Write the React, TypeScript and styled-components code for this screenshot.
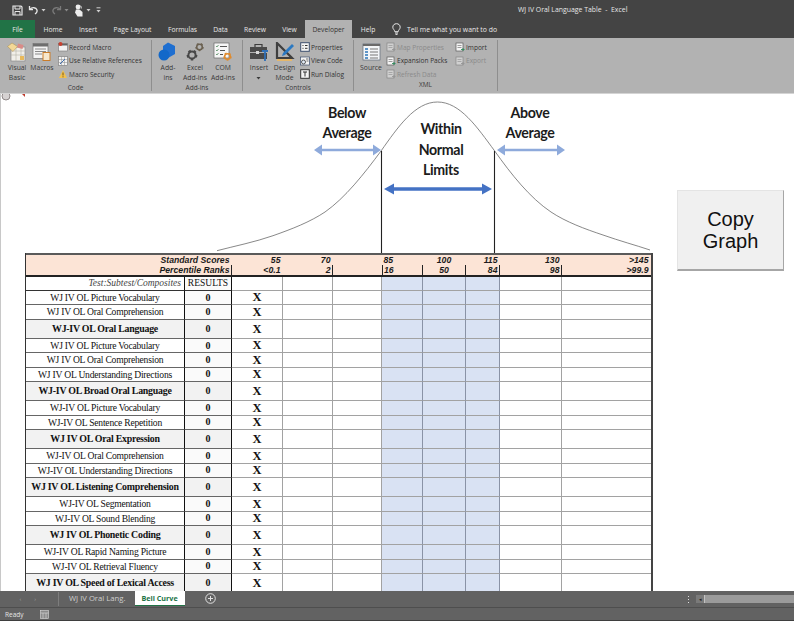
import React from 'react';
import styled, { createGlobalStyle } from 'styled-components';

const GlobalStyle = createGlobalStyle`
    html, body {
        margin: 0;
        padding: 0;
        background: #ffffff;
    }
`;

const Window = styled.div`
    width: 794px;
    height: 621px;
    display: flex;
    flex-direction: column;
    overflow: hidden;
    font-family: 'Open Sans', 'Liberation Sans', sans-serif;
`;

const TitleBar = styled.div`
    height: 20px;
    background: #444444;
    display: flex;
    align-items: center;
    position: relative;
    flex-shrink: 0;
`;

const QuickAccess = styled.div`
    display: flex;
    align-items: center;
    padding-left: 12px;
    gap: 5px;
`;

const QatPair = styled.span`
    display: flex;
    align-items: center;
    gap: 2px;
`;

const DocTitle = styled.div`
    position: absolute;
    left: 518px;
    top: 4px;
    font-size: 6.9px;
    line-height: 11px;
    color: #e6e6e6;
    white-space: pre;
`;

const TabBar = styled.div`
    height: 18px;
    background: #444444;
    display: flex;
    flex-shrink: 0;
`;

const Tab = styled.div<{ $w: number; $kind?: 'file' | 'active' }>`
    width: ${(p) => p.$w}px;
    display: flex;
    align-items: center;
    justify-content: center;
    font-size: 6.7px;
    color: ${(p) => (p.$kind === 'active' ? '#333333' : '#e8e8e8')};
    background: ${(p) =>
        p.$kind === 'file' ? '#217346' : p.$kind === 'active' ? '#b2b2b2' : 'transparent'};
`;

const TellMe = styled.div`
    display: flex;
    align-items: center;
    gap: 6px;
    margin-left: 8px;
    font-size: 6.85px;
    color: #e8e8e8;
`;

const Ribbon = styled.div`
    height: 56px;
    background: #b2b2b2;
    border-bottom: 1px solid #d4d4d4;
    box-sizing: border-box;
    display: flex;
    padding-top: 2px;
    flex-shrink: 0;
`;

const Group = styled.div<{ $w: number }>`
    width: ${(p) => p.$w}px;
    height: 51px;
    box-sizing: border-box;
    border-right: 1px solid #8e8e8e;
    display: flex;
    flex-direction: column;
`;

const GroupBody = styled.div<{ $pad: number }>`
    flex: 1;
    display: flex;
    padding-left: ${(p) => p.$pad}px;
`;

const GroupCaption = styled.div`
    height: 11px;
    text-align: center;
    font-size: 6.5px;
    line-height: 9px;
    color: #3a3a3a;
`;

const BigButton = styled.div<{ $w: number }>`
    width: ${(p) => p.$w}px;
    display: flex;
    flex-direction: column;
    align-items: center;
    padding-top: 2px;
`;

const BigIcon = styled.div`
    height: 20px;
    display: flex;
    align-items: center;
    justify-content: center;
`;

const BigLabel = styled.div`
    margin-top: 1px;
    font-size: 6.8px;
    line-height: 10px;
    color: #3a3a3a;
    text-align: center;
    white-space: pre;
`;

const SmallStack = styled.div<{ $w?: number; $left?: number }>`
    ${(p) => (p.$w ? `width: ${p.$w}px;` : '')}
    margin-left: ${(p) => p.$left ?? 0}px;
    display: flex;
    flex-direction: column;
    gap: 3.7px;
    padding-top: 2px;
`;

const SmallItem = styled.div<{ $off?: boolean }>`
    height: 10px;
    display: flex;
    align-items: center;
    gap: 1px;
    font-size: 6.55px;
    white-space: nowrap;
    color: ${(p) => (p.$off ? '#858585' : '#333333')};
    opacity: ${(p) => (p.$off ? 0.85 : 1)};
`;

const Sheet = styled.div`
    flex: 1;
    min-height: 0;
    position: relative;
    overflow: hidden;
    background: #ffffff;
    border-left: 1px solid #c8c8c8;
`;

const CommentMark = styled.svg`
    position: absolute;
    left: 0;
    top: 0;
`;

const ChartArea = styled.div`
    position: relative;
    height: 159px;
    margin-left: -1px;
`;

const CurveLabel = styled.div<{ $x: number; $y: number; $lh: number }>`
    position: absolute;
    left: ${(p) => p.$x - 60}px;
    top: ${(p) => p.$y}px;
    width: 120px;
    text-align: center;
    font-family: Lato, 'Open Sans', sans-serif;
    font-weight: 700;
    font-size: 14.2px;
    letter-spacing: -0.35px;
    line-height: ${(p) => p.$lh}px;
    color: #1c1c1c;
    white-space: pre;
`;

const CopyButton = styled.div`
    position: absolute;
    left: 676px;
    top: 96px;
    width: 107px;
    height: 81px;
    box-sizing: border-box;
    background: #f0f0f0;
    border-right: 1px solid #a6a6a6;
    border-bottom: 2px solid #a6a6a6;
    border-top: 1px solid #e4e4e4;
    border-left: 1px solid #e4e4e4;
    display: flex;
    align-items: center;
    justify-content: center;
    text-align: center;
    font-family: 'Liberation Sans', Arial, sans-serif;
    font-size: 20px;
    line-height: 22px;
    color: #111111;
`;

// the last column takes what the table's outer borders leave over
const COLUMNS = '158px 48px 51px 50px 49px 41px 43px 34px 62px 1fr';

const Table = styled.div`
    width: 628px;
    margin-left: 24px;
    box-sizing: border-box;
    border-left: 1px solid #333333;
    border-right: 2px solid #444444;
`;

const ScoreHeader = styled.div`
    background: #fce4d6;
    border-top: 2px solid #5a5a5a;
    border-bottom: 2px solid #222222;
    display: grid;
    grid-template-columns: ${COLUMNS};
    grid-template-rows: 10px 10px;
`;

const ScoreCell = styled.div<{
    $col: number;
    $span?: number;
    $row: number;
    $align?: string;
    $tickRight?: boolean;
    $tickLeft?: boolean;
}>`
    grid-column: ${(p) => p.$col} / span ${(p) => p.$span ?? 1};
    grid-row: ${(p) => p.$row};
    text-align: ${(p) => p.$align ?? 'right'};
    font-family: 'Liberation Sans', Arial, sans-serif;
    font-style: italic;
    font-weight: 700;
    font-size: 8.7px;
    line-height: 10px;
    color: #1a1a1a;
    padding: 0 ${(p) => (p.$tickRight ? '1.5px' : '2.5px')} 0 ${(p) => (p.$tickLeft ? '1px' : '1.5px')};
    white-space: nowrap;
    box-sizing: border-box;
    border-right: ${(p) => (p.$tickRight ? '1px solid #222222' : 'none')};
    border-left: ${(p) => (p.$tickLeft ? '1px solid #222222' : 'none')};
`;

const Row = styled.div<{ $h: number }>`
    height: ${(p) => p.$h}px;
    display: grid;
    grid-template-columns: ${COLUMNS};
    grid-template-rows: minmax(0, 1fr);
`;

const NameCell = styled.div<{ $bold?: boolean; $head?: boolean }>`
    box-sizing: border-box;
    display: flex;
    align-items: center;
    justify-content: ${(p) => (p.$head ? 'flex-end' : 'center')};
    padding-right: ${(p) => (p.$head ? '3px' : '0')};
    border-bottom: 1px solid ${(p) => (p.$head ? '#333333' : '#666666')};
    background: ${(p) => (p.$bold ? '#f2f2f2' : '#ffffff')};
    font-family: 'Liberation Serif', 'Times New Roman', serif;
    font-size: ${(p) => (p.$head ? '9.5px' : p.$bold ? '9.9px' : '9.6px')};
    letter-spacing: ${(p) => (p.$head ? '0' : p.$bold ? '-0.25px' : '-0.22px')};
    line-height: 1;
    font-weight: ${(p) => (p.$bold ? 700 : 400)};
    font-style: ${(p) => (p.$head ? 'italic' : 'normal')};
    color: ${(p) => (p.$head ? '#444444' : '#111111')};
    white-space: nowrap;
`;

const ResultCell = styled.div<{ $bold?: boolean; $head?: boolean }>`
    box-sizing: border-box;
    display: flex;
    align-items: center;
    justify-content: center;
    border-left: 1px solid #111111;
    border-right: 1px solid #111111;
    border-bottom: 1px solid ${(p) => (p.$head ? '#333333' : '#666666')};
    background: ${(p) => (p.$bold ? '#f2f2f2' : '#fafafa')};
    font-family: 'Liberation Serif', 'Times New Roman', serif;
    font-size: ${(p) => (p.$head ? '9.5px' : '10px')};
    line-height: 1;
    font-weight: ${(p) => (p.$head ? 400 : 700)};
    color: #111111;
`;

const ScaleCell = styled.div<{ $normal?: boolean; $last?: boolean }>`
    box-sizing: border-box;
    display: flex;
    align-items: center;
    justify-content: center;
    border-bottom: 1px solid #a2a2a2;
    border-right: ${(p) => (p.$last ? 'none' : `1px solid ${p.$normal ? '#8a93a6' : '#a2a2a2'}`)};
    background: ${(p) => (p.$normal ? '#d9e2f3' : '#ffffff')};
    font-family: 'Liberation Serif', 'Times New Roman', serif;
    font-weight: 700;
    font-size: 12.5px;
    line-height: 1;
    color: #111111;
`;

const SheetTabs = styled.div`
    height: 16px;
    background: #626262;
    display: flex;
    align-items: flex-start;
    position: relative;
    flex-shrink: 0;
`;

const TabNav = styled.div`
    width: 59px;
    height: 14px;
    margin-top: 1px;
    box-sizing: border-box;
    border-right: 1px solid #7d7d7d;
    display: flex;
    align-items: center;
    justify-content: flex-end;
    gap: 13px;
    padding-right: 22px;
    font-size: 6px;
    color: #a0a0a0;
`;

const SheetTab = styled.div<{ $active?: boolean }>`
    height: 14px;
    display: flex;
    align-items: center;
    padding: ${(p) => (p.$active ? '0 7px 0 6px' : '0 10px')};
    background: ${(p) => (p.$active ? '#ffffff' : 'transparent')};
    border-bottom: ${(p) => (p.$active ? '1px solid #217346' : 'none')};
    color: ${(p) => (p.$active ? '#217346' : '#cfcfcf')};
    font-size: ${(p) => (p.$active ? '7.2px' : '7.7px')};
    font-weight: ${(p) => (p.$active ? 700 : 400)};
    white-space: nowrap;
`;

const AddSheet = styled.div`
    margin-left: 20px;
    margin-top: 2px;
    display: flex;
`;

const ScrollArea = styled.div`
    position: absolute;
    left: 686px;
    right: 0;
    top: 0;
    height: 16px;
    display: flex;
    align-items: center;
    gap: 7px;
`;

const SplitDots = styled.div`
    width: 1px;
    height: 7px;
    background: repeating-linear-gradient(#e0e0e0 0 1px, transparent 1px 3px);
    margin-left: 2px;
`;

const ScrollTrack = styled.div`
    flex: 1;
    height: 8px;
    background: #9b9b9b;
    display: flex;
`;

const ScrollButton = styled.div`
    width: 8px;
    height: 8px;
    background: #7a7a7a;
    border-right: 1px solid #c2c2c2;
    display: flex;
    align-items: center;
    justify-content: center;
    font-size: 5px;
    color: #222222;
`;

const StatusBar = styled.div`
    height: 14px;
    background: #626262;
    border-top: 1px solid #4e4e4e;
    border-bottom: 1px solid #3e3e3e;
    box-sizing: border-box;
    display: flex;
    align-items: center;
    padding-left: 5px;
    gap: 16px;
    font-size: 6.5px;
    color: #e4e4e4;
    flex-shrink: 0;
`;

// ribbon and title bar icons
const SaveIcon = () => (
    <svg width="11" height="11" viewBox="0 0 11 11">
        <path d="M1 1h8l1 1v8H1z" fill="none" stroke="#e8e8e8" strokeWidth="1.2" />
        <path d="M3 1v3h5V1M3 10V6.5h5V10" fill="none" stroke="#e8e8e8" />
    </svg>
);

const UndoIcon = () => (
    <svg width="11" height="10" viewBox="0 0 11 10">
        <path d="M1.5 1v3.5H5" fill="none" stroke="#e8e8e8" strokeWidth="1.3" />
        <path d="M2 4.3C4 2 8 2.2 9 5c.5 1.7-.5 3-2 4" fill="none" stroke="#e8e8e8" strokeWidth="1.3" />
    </svg>
);

const RedoIcon = () => (
    <svg width="11" height="10" viewBox="0 0 11 10">
        <path d="M9.5 1v3.500H6" fill="none" stroke="#7a7a7a" strokeWidth="1.300" />
        <path d="M9 4.300C7 2 3 2.200 2 5c-.5 1.700.5 3 2 4" fill="none" stroke="#7a7a7a" strokeWidth="1.300" />
    </svg>
);

const Caret = ({ color = '#cfcfcf' }: { color?: string }) => (
    <svg width="5" height="4" viewBox="0 0 5 4">
        <path d="M0.5 1h4L2.5 3.5z" fill={color} />
    </svg>
);

const TouchIcon = () => (
    <svg width="10" height="13" viewBox="0 0 10 13">
        <circle cx="4" cy="3" r="2.4" fill="#ededed" />
        <path d="M2 5.5h3.5l3 2.5v4.5H3.5L1 8.5z" fill="#ededed" />
        <path d="M5.5 1.5c1.5.3 2 1.5 1.7 3" fill="none" stroke="#ededed" />
    </svg>
);

const CustomizeIcon = () => (
    <svg width="5" height="6" viewBox="0 0 5 6">
        <path d="M0.5 0.8h4" stroke="#cfcfcf" />
        <path d="M0.5 3h4L2.5 5.5z" fill="#cfcfcf" />
    </svg>
);

const BulbIcon = () => (
    <svg width="9" height="12" viewBox="0 0 9 12">
        <path
            d="M4.5.7C2.3.7.8 2.2.8 4.2c0 1.900 1.700 2.500 2 4.500h3.400c.3-2 2-2.600 2-4.500C8.200 2.200 6.700.7 4.500.7z"
            fill="none"
            stroke="#e8e8e8"
        />
        <path d="M3 10h3M3.500 11.400h2" stroke="#e8e8e8" />
    </svg>
);

const VisualBasicIcon = () => (
    <svg width="20" height="20" viewBox="0 0 20 20">
        <rect x="4" y="5" width="14" height="14" fill="#f1efe9" stroke="#8c8c8c" strokeWidth="0.7" />
        <path d="M4 9h14M4 13h14M9 5v14M14 5v9" stroke="#b5b1a8" strokeWidth="0.6" />
        <path d="M0.500 4.500L5 1l5.500 3.500L6 9.500z" fill="#f4d896" stroke="#a78d50" strokeWidth="0.5" />
        <path d="M11 1.500l5.500 1.500-1 4-5.500-1.500z" fill="#d98b87" />
        <rect x="13" y="14" width="4" height="4" fill="#e8b95a" />
    </svg>
);

const MacrosIcon = () => (
    <svg width="20" height="20" viewBox="0 0 20 20">
        <rect x="1" y="1.500" width="15" height="15" fill="#f3f3f3" stroke="#777777" strokeWidth="0.7" />
        <rect x="1" y="1.500" width="15" height="3" fill="#6e6e6e" />
        <path d="M3 7h11M3 9.500h11M3 12h7" stroke="#8a8a8a" />
        <rect x="11" y="10.500" width="7" height="8" fill="#f6e7cd" stroke="#c97c2a" />
    </svg>
);

const RecordIcon = () => (
    <svg width="10" height="10" viewBox="0 0 10 10">
        <rect x="0.500" y="1.500" width="9" height="7.500" fill="#f2f2f2" stroke="#777777" strokeWidth="0.6" />
        <rect x="0.500" y="1.500" width="9" height="2" fill="#666666" />
        <circle cx="2.500" cy="2" r="2" fill="#c8402f" />
    </svg>
);

const RelativeIcon = () => (
    <svg width="10" height="10" viewBox="0 0 10 10">
        <rect x="0.500" y="0.500" width="9" height="9" fill="#f2f2f2" stroke="#777777" strokeWidth="0.6" />
        <path d="M0.500 3.500h9M0.500 6.500h9M3.500.5v9M6.500.5v9" stroke="#8a8a8a" strokeWidth="0.5" />
        <path d="M2 8l5-5" stroke="#3f6fb0" />
    </svg>
);

const WarningIcon = () => (
    <svg width="10" height="10" viewBox="0 0 10 10">
        <path d="M5 1l4 8H1z" fill="#f2c14e" />
        <path d="M5 3.500v3M5 7.300v1" stroke="#6d4a0a" strokeWidth="0.9" />
    </svg>
);

const AddInsIcon = () => (
    <svg width="20" height="20" viewBox="0 0 20 20">
        <path d="M10 0.500l7 3.500v8l-7 4-5-3V4z" fill="#1f6fd0" />
        <circle cx="6" cy="13" r="5.500" fill="#1268c9" />
    </svg>
);

const Gear = ({ cx, cy, r, color }: { cx: number; cy: number; r: number; color: string }) => (
    <g>
        <circle cx={cx} cy={cy} r={r} fill="none" stroke={color} strokeWidth={r * 0.55} />
        <circle cx={cx} cy={cy} r={r * 1.28} fill="none" stroke={color} strokeWidth={r * 0.45} strokeDasharray={`${r * 0.7} ${r * 0.9}`} />
    </g>
);

const ExcelAddInsIcon = () => (
    <svg width="20" height="20" viewBox="0 0 20 20">
        <Gear cx={7} cy={13} r={3.600} color="#474747" />
        <Gear cx={14.500} cy={5} r={2.800} color="#6a6050" />
    </svg>
);

const ComAddInsIcon = () => (
    <svg width="20" height="20" viewBox="0 0 20 20">
        <rect x="1" y="1" width="15" height="15" fill="#f6f6f6" stroke="#6a6a6a" strokeWidth="0.7" />
        <path d="M3 4l1 1 1.500-2M3 8l1 1 1.500-2M3 12l1 1 1.500-2" fill="none" stroke="#3d7d4e" strokeWidth="0.7" />
        <path d="M7 4.500h7M7 8.500h5M7 12.500h3" stroke="#555555" />
        <Gear cx={14.500} cy={14.500} r={2.800} color="#e08a2c" />
    </svg>
);

const InsertIcon = () => (
    <svg width="20" height="20" viewBox="0 0 20 20">
        <path d="M6 5V2.500h7V5" fill="none" stroke="#3c3c3c" strokeWidth="1.200" />
        <rect x="1" y="5" width="17" height="12" fill="#4a4a4a" />
        <rect x="1" y="10" width="17" height="1" fill="#b2b2b2" />
        <rect x="7" y="9" width="3" height="3" fill="#d8d8d8" />
        <path d="M13 9h6M16 9v10" stroke="#2f6fb7" strokeWidth="1.800" />
    </svg>
);

const DesignModeIcon = () => (
    <svg width="20" height="20" viewBox="0 0 20 20">
        <path d="M2 1v15h15z" fill="none" stroke="#3f3f3f" strokeWidth="2.200" />
        <path d="M8 11L17 2l2 2-9 9-3 1z" fill="#2b79c2" />
        <rect x="2" y="17" width="15" height="2" fill="#e5b76a" />
    </svg>
);

const PropertiesIcon = () => (
    <svg width="10" height="10" viewBox="0 0 10 10">
        <rect x="0.700" y="0.700" width="8.600" height="8.600" fill="#f4f4f4" stroke="#3d4f6e" />
        <path d="M2.500 3.500h1M5 3.500h2.500M2.500 6.300h1M5 6.300h2.500" stroke="#333333" />
    </svg>
);

const ViewCodeIcon = () => (
    <svg width="10" height="10" viewBox="0 0 10 10">
        <rect x="0.500" y="1" width="9" height="8" fill="#f4f4f4" stroke="#3d4f6e" strokeWidth="0.7" />
        <circle cx="3.500" cy="6" r="2" fill="#dfe9f5" stroke="#333333" strokeWidth="0.8" />
        <path d="M6 3h2.500M6.500 5h2" stroke="#333333" strokeWidth="0.7" />
    </svg>
);

const RunDialogIcon = () => (
    <svg width="10" height="10" viewBox="0 0 10 10">
        <rect x="0.700" y="0.700" width="8.600" height="8.600" fill="#f4f4f4" stroke="#333333" />
        <path d="M3 3h4M5 3v4.500" stroke="#333333" />
    </svg>
);

const SourceIcon = () => (
    <svg width="19" height="18" viewBox="0 0 19 18">
        <rect x="1" y="1" width="17" height="16" fill="#f4f6f8" stroke="#5e6a78" strokeWidth="0.7" />
        <rect x="1" y="1" width="17" height="2" fill="#6a6a6a" />
        <path d="M3 6h3M3 9h3M3 12h3M3 15h3" stroke="#2e75b6" strokeWidth="1.300" />
        <path d="M8 6h8M8 9h8M8 12h8M8 15h8" stroke="#777777" strokeWidth="1.100" />
    </svg>
);

const SmallDoc = ({ faded, accent }: { faded?: boolean; accent: string }) => (
    <svg width="10" height="10" viewBox="0 0 10 10" opacity={faded ? 0.55 : 1}>
        <rect x="1" y="1" width="7" height="8" fill="#f4f4f4" stroke="#5b5b5b" strokeWidth="0.7" />
        <path d="M2.500 3.500h4M2.500 5.500h4" stroke="#777777" strokeWidth="0.7" />
        <path d="M6 7.500h3.500M8 6v3" stroke={accent} strokeWidth="0.9" />
    </svg>
);

const BellCurve = () => (
    <svg width="794" height="159" viewBox="0 94 794 159" style={{ display: 'block' }}>
        <path
            d="M217 250.700C235 246 255 242 273 235.700C292 229 310 222 325 212C345 198 364 174 381 151C398 127 415 102 437.500 102C460 102 477 127 494.700 151C511 174 530 198 551 212C566 222 585 229 603 235C620 241 635 245 650 250"
            fill="none"
            stroke="#6a6a6a"
            strokeWidth="0.8"
        />
        <path d="M381.500 151V253M494.500 151V253" stroke="#222222" strokeWidth="1.100" />
        <path d="M321 150H375" stroke="#8eaadb" strokeWidth="2.600" />
        <path d="M314 150l8-5.500v11zM381 150l-8-5.500v11z" fill="#8eaadb" />
        <path d="M503 150H558" stroke="#8eaadb" strokeWidth="2.600" />
        <path d="M497 150l8-5.500v11zM565 150l-8-5.500v11z" fill="#8eaadb" />
        <path d="M391 189H485" stroke="#4472c4" strokeWidth="3.600" />
        <path d="M384 189l10-5.500v11zM492 189l-10-5.500v11z" fill="#4472c4" />
    </svg>
);

interface RowData {
    name: string;
    bold?: boolean;
}

const rows: RowData[] = [
    { name: 'WJ IV OL Picture Vocabulary' },
    { name: 'WJ IV OL Oral Comprehension' },
    { name: 'WJ-IV OL Oral Language', bold: true },
    { name: 'WJ IV OL Picture Vocabulary' },
    { name: 'WJ IV OL Oral Comprehension' },
    { name: 'WJ IV OL Understanding Directions' },
    { name: 'WJ-IV OL Broad Oral Language', bold: true },
    { name: 'WJ-IV OL Picture Vocabulary' },
    { name: 'WJ-IV OL Sentence Repetition' },
    { name: 'WJ IV OL Oral Expression', bold: true },
    { name: 'WJ-IV OL Oral Comprehension' },
    { name: 'WJ-IV OL Understanding Directions' },
    { name: 'WJ IV OL Listening Comprehension', bold: true },
    { name: 'WJ-IV OL Segmentation' },
    { name: 'WJ-IV OL Sound Blending' },
    { name: 'WJ IV OL Phonetic Coding', bold: true },
    { name: 'WJ-IV OL Rapid Naming Picture' },
    { name: 'WJ-IV OL Retrieval Fluency' },
    { name: 'WJ IV OL Speed of Lexical Access', bold: true },
];

const ScaleCells: React.FC<{ mark?: boolean }> = ({ mark }) => (
    <>
        <ScaleCell>{mark ? 'X' : ''}</ScaleCell>
        <ScaleCell />
        <ScaleCell />
        <ScaleCell $normal />
        <ScaleCell $normal />
        <ScaleCell $normal />
        <ScaleCell />
        <ScaleCell $last />
    </>
);

const tabs: [string, number][] = [
    ['Home', 36],
    ['Insert', 34],
    ['Page Layout', 55],
    ['Formulas', 45],
    ['Data', 31],
    ['Review', 38],
    ['View', 31],
];

export default function App() {
    return (
        <Window>
            <GlobalStyle />
            <TitleBar>
                <QuickAccess>
                    <SaveIcon />
                    <QatPair><UndoIcon /><Caret /></QatPair>
                    <QatPair><RedoIcon /><Caret color="#8a8a8a" /></QatPair>
                    <QatPair><TouchIcon /><Caret /></QatPair>
                    <CustomizeIcon />
                </QuickAccess>
                <DocTitle>WJ IV Oral Language Table  -  Excel</DocTitle>
            </TitleBar>
            <TabBar>
                <Tab $w={35} $kind="file">File</Tab>
                {tabs.map(([label, w]) => (
                    <Tab key={label} $w={w}>{label}</Tab>
                ))}
                <Tab $w={47} $kind="active">Developer</Tab>
                <Tab $w={32}>Help</Tab>
                <TellMe>
                    <BulbIcon />
                    Tell me what you want to do
                </TellMe>
            </TabBar>
            <Ribbon>
                <Group $w={152}>
                    <GroupBody $pad={4}>
                        <BigButton $w={26}>
                            <BigIcon><VisualBasicIcon /></BigIcon>
                            <BigLabel>{'Visual\nBasic'}</BigLabel>
                        </BigButton>
                        <BigButton $w={24}>
                            <BigIcon><MacrosIcon /></BigIcon>
                            <BigLabel>Macros</BigLabel>
                        </BigButton>
                        <SmallStack $left={4}>
                            <SmallItem><RecordIcon />Record Macro</SmallItem>
                            <SmallItem><RelativeIcon />Use Relative References</SmallItem>
                            <SmallItem><WarningIcon />Macro Security</SmallItem>
                        </SmallStack>
                    </GroupBody>
                    <GroupCaption>Code</GroupCaption>
                </Group>
                <Group $w={91}>
                    <GroupBody $pad={3}>
                        <BigButton $w={26}>
                            <BigIcon><AddInsIcon /></BigIcon>
                            <BigLabel>{'Add-\nins'}</BigLabel>
                        </BigButton>
                        <BigButton $w={28}>
                            <BigIcon><ExcelAddInsIcon /></BigIcon>
                            <BigLabel>{'Excel\nAdd-ins'}</BigLabel>
                        </BigButton>
                        <BigButton $w={28}>
                            <BigIcon><ComAddInsIcon /></BigIcon>
                            <BigLabel>{'COM\nAdd-ins'}</BigLabel>
                        </BigButton>
                    </GroupBody>
                    <GroupCaption>Add-ins</GroupCaption>
                </Group>
                <Group $w={111}>
                    <GroupBody $pad={3}>
                        <BigButton $w={26}>
                            <BigIcon><InsertIcon /></BigIcon>
                            <BigLabel>
                                Insert
                                <br />
                                <Caret color="#3a3a3a" />
                            </BigLabel>
                        </BigButton>
                        <BigButton $w={25}>
                            <BigIcon><DesignModeIcon /></BigIcon>
                            <BigLabel>{'Design\nMode'}</BigLabel>
                        </BigButton>
                        <SmallStack $left={3}>
                            <SmallItem><PropertiesIcon />Properties</SmallItem>
                            <SmallItem><ViewCodeIcon />View Code</SmallItem>
                            <SmallItem><RunDialogIcon />Run Dialog</SmallItem>
                        </SmallStack>
                    </GroupBody>
                    <GroupCaption>Controls</GroupCaption>
                </Group>
                <Group $w={144}>
                    <GroupBody $pad={2}>
                        <BigButton $w={30}>
                            <BigIcon><SourceIcon /></BigIcon>
                            <BigLabel>Source</BigLabel>
                        </BigButton>
                        <SmallStack $w={69}>
                            <SmallItem $off><SmallDoc faded accent="#777777" />Map Properties</SmallItem>
                            <SmallItem><SmallDoc accent="#2f8a5b" />Expansion Packs</SmallItem>
                            <SmallItem $off><SmallDoc faded accent="#777777" />Refresh Data</SmallItem>
                        </SmallStack>
                        <SmallStack>
                            <SmallItem><SmallDoc accent="#2f8a5b" />Import</SmallItem>
                            <SmallItem $off><SmallDoc faded accent="#777777" />Export</SmallItem>
                        </SmallStack>
                    </GroupBody>
                    <GroupCaption>XML</GroupCaption>
                </Group>
            </Ribbon>
            <Sheet>
                <CommentMark width="26" height="10" viewBox="0 0 26 10">
                    <circle cx="5" cy="2" r="4" fill="#d6d2d2" stroke="#8f8888" />
                    <path d="M21 0h3v3z" fill="#c0392b" />
                </CommentMark>
                <ChartArea>
                    <BellCurve />
                    <CurveLabel $x={347} $y={9} $lh={20}>{'Below\nAverage'}</CurveLabel>
                    <CurveLabel $x={441} $y={25} $lh={20.500}>{'Within\nNormal\nLimits'}</CurveLabel>
                    <CurveLabel $x={530} $y={9} $lh={20}>{'Above\nAverage'}</CurveLabel>
                </ChartArea>
                <CopyButton>
                    Copy
                    <br />
                    Graph
                </CopyButton>
                <Table>
                    <ScoreHeader>
                        <ScoreCell $col={1} $span={2} $row={1}>Standard Scores</ScoreCell>
                        <ScoreCell $col={3} $row={1}>55</ScoreCell>
                        <ScoreCell $col={4} $row={1}>70</ScoreCell>
                        <ScoreCell $col={6} $row={1} $align="left">85</ScoreCell>
                        <ScoreCell $col={7} $row={1} $align="center">100</ScoreCell>
                        <ScoreCell $col={8} $row={1}>115</ScoreCell>
                        <ScoreCell $col={9} $row={1}>130</ScoreCell>
                        <ScoreCell $col={10} $row={1}>&gt;145</ScoreCell>
                        <ScoreCell $col={1} $span={2} $row={2} $tickRight>Percentile Ranks</ScoreCell>
                        <ScoreCell $col={3} $row={2}>&lt;0.1</ScoreCell>
                        <ScoreCell $col={4} $row={2} $tickRight>2</ScoreCell>
                        <ScoreCell $col={6} $row={2} $align="left" $tickLeft $tickRight>16</ScoreCell>
                        <ScoreCell $col={7} $row={2} $align="center" $tickRight>50</ScoreCell>
                        <ScoreCell $col={8} $row={2} $tickRight>84</ScoreCell>
                        <ScoreCell $col={9} $row={2} $tickRight>98</ScoreCell>
                        <ScoreCell $col={10} $row={2}>&gt;99.9</ScoreCell>
                    </ScoreHeader>
                    <Row $h={14}>
                        <NameCell $head>Test:Subtest/Composites</NameCell>
                        <ResultCell $head>RESULTS</ResultCell>
                        <ScaleCells />
                    </Row>
                    {rows.map((row, i) => (
                        <Row key={i} $h={row.bold ? 19.200 : 14.400}>
                            <NameCell $bold={row.bold}>{row.name}</NameCell>
                            <ResultCell $bold={row.bold}>0</ResultCell>
                            <ScaleCells mark />
                        </Row>
                    ))}
                </Table>
            </Sheet>
            <SheetTabs>
                <TabNav>
                    <span>‹</span>
                    <span>›</span>
                </TabNav>
                <SheetTab>WJ IV Oral Lang.</SheetTab>
                <SheetTab $active>Bell Curve</SheetTab>
                <AddSheet>
                    <svg width="11" height="11" viewBox="0 0 11 11">
                        <circle cx="5.500" cy="5.500" r="4.800" fill="none" stroke="#e0e0e0" />
                        <path d="M5.500 3v5M3 5.500h5" stroke="#e0e0e0" />
                    </svg>
                </AddSheet>
                <ScrollArea>
                    <SplitDots />
                    <ScrollTrack>
                        <ScrollButton>◂</ScrollButton>
                    </ScrollTrack>
                </ScrollArea>
            </SheetTabs>
            <StatusBar>
                Ready
                <svg width="9" height="9" viewBox="0 0 9 9">
                    <rect x="0.500" y="0.500" width="8" height="8" fill="#8c8c8c" stroke="#dcdcdc" strokeWidth="0.6" />
                    <path d="M0.500 3h8M3 3v5.500M6 3v5.500" stroke="#dcdcdc" strokeWidth="0.6" />
                </svg>
            </StatusBar>
        </Window>
    );
}
